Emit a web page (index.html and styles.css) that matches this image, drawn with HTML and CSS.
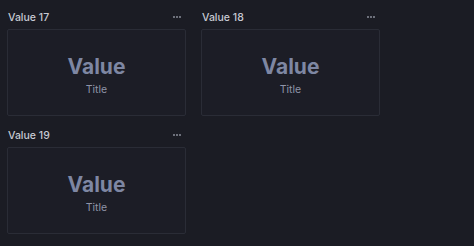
FILE: index.html
```html
<!DOCTYPE html>
<html lang="en">
<head>
    <meta charset="UTF-8">
    <title>Dashboard</title>
    <link rel="stylesheet" href="styles.css">
</head>
<body>
    <div class="panel-grid">
        <div class="panel">
            <div class="panel-header">
                <span class="panel-title">Value 17</span>
                <span class="panel-menu"><i></i><i></i><i></i></span>
            </div>
            <div class="stat-card">
                <div class="stat-value">Value</div>
                <div class="stat-title">Title</div>
            </div>
        </div>
        <div class="panel">
            <div class="panel-header">
                <span class="panel-title">Value 18</span>
                <span class="panel-menu"><i></i><i></i><i></i></span>
            </div>
            <div class="stat-card">
                <div class="stat-value">Value</div>
                <div class="stat-title">Title</div>
            </div>
        </div>
        <div class="panel">
            <div class="panel-header">
                <span class="panel-title">Value 19</span>
                <span class="panel-menu"><i></i><i></i><i></i></span>
            </div>
            <div class="stat-card">
                <div class="stat-value">Value</div>
                <div class="stat-title">Title</div>
            </div>
        </div>
    </div>
</body>
</html>
```

FILE: styles.css
```css
:root {
    --bg: #1b1c24;
    --card-bg: #1c1d26;
    --card-border: #2a2c36;
    --header-text: #c7c9d3;
    --value-text: #7e87a3;
    --title-text: #8f94a8;
    --menu-dots: #8a8d99;
}

body {
    margin: 0;
    background-color: var(--bg);
    font-family: Inter, "Noto Sans", sans-serif;
    height: 100vh;
}

.panel-grid {
    display: grid;
    grid-template-columns: repeat(2, 179px);
    column-gap: 15px;
    row-gap: 11px;
    padding: 9px 0 0 7px;
}

.panel {
    display: flex;
    flex-direction: column;
}

.panel-header {
    display: flex;
    justify-content: space-between;
    align-items: center;
    height: 16px;
    margin-bottom: 4px;
    padding: 0 5px 0 1px;
}

.panel-title {
    font-size: 10.5px;
    font-weight: 500;
    color: var(--header-text);
}

.panel-menu {
    display: flex;
    gap: 1px;
    margin-top: -1px;
}

.panel-menu i {
    width: 2px;
    height: 2px;
    border-radius: 50%;
    background: var(--menu-dots);
}

.stat-card {
    box-sizing: border-box;
    height: 87px;
    border: 1px solid var(--card-border);
    border-radius: 2px;
    background: var(--card-bg);
    display: flex;
    flex-direction: column;
    align-items: center;
    justify-content: center;
    padding-top: 6px;
}

.stat-value {
    font-size: 21px;
    font-weight: 700;
    line-height: 24px;
    color: var(--value-text);
}

.stat-title {
    font-size: 10.5px;
    line-height: 14px;
    margin-top: 4px;
    color: var(--title-text);
}
```
